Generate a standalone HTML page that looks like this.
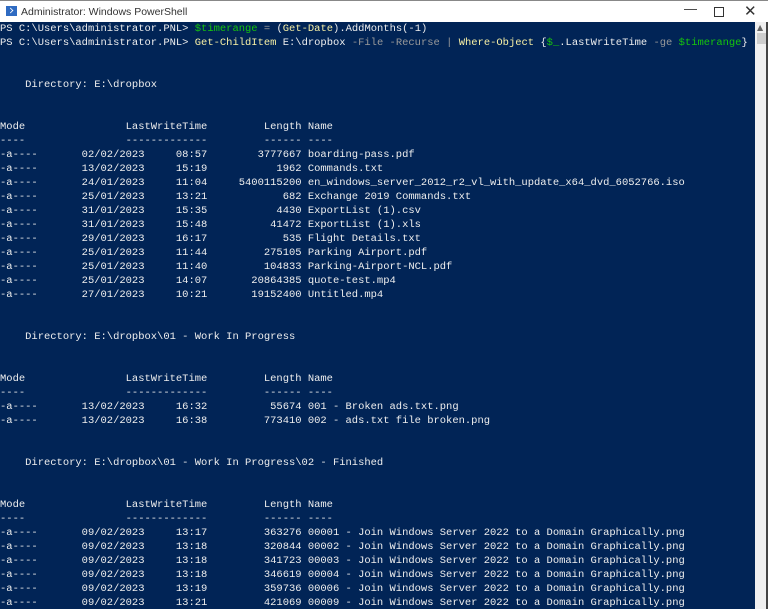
<!DOCTYPE html>
<html><head><meta charset="utf-8"><style>
html,body{margin:0;padding:0;width:768px;height:609px;overflow:hidden;background:#fff}
#title{position:absolute;left:0;top:0;width:768px;height:22px;background:#fff;border-top:1px solid #888;box-sizing:border-box}
#title .t{position:absolute;left:21px;top:5px;font:10.5px "Liberation Sans",sans-serif;color:#333}
#icon{position:absolute;left:6px;top:5px;width:11px;height:10px;background:#2f6bc2}
#icon:after{content:"";position:absolute;left:2px;top:2px;width:4px;height:4px;border-right:1.5px solid #fff;border-bottom:1.5px solid #fff;transform:rotate(-45deg) scale(.8)}
.ctl{position:absolute;top:3px;font:13px "Liberation Sans",sans-serif;color:#333}
#con{position:absolute;left:0;top:22px;width:755px;height:587px;background:#012456;overflow:hidden}
pre{margin:0;font:10.48px/14px "Liberation Mono",monospace;color:#eeeeee;white-space:pre}
.g{color:#16c60c}.y{color:#f9f1a5}.d{color:#9a9a9a}
#sb{position:absolute;left:755px;top:22px;width:12px;height:587px;background:#f0f0f0}
#thumb{position:absolute;left:757px;top:33px;width:9px;height:11px;background:#cdcdcd}
#edge{position:absolute;left:766px;top:22px;width:2px;height:587px;background:#444}
</style></head><body>
<div id="title"><div id="icon"></div><span class="t">Administrator: Windows PowerShell</span>
<span class="ctl" style="left:684px;top:0px">&#8212;</span>
<span style="position:absolute;left:714px;top:6px;width:8px;height:8px;border:1px solid #333"></span>
<span class="ctl" style="left:744px;top:1px;font-size:15px">&#10005;</span></div>
<div id="con"><pre>PS C:\Users\administrator.PNL&gt; <span class="g">$timerange</span> <span class="d">=</span> (<span class="y">Get-Date</span>).AddMonths(-1)
PS C:\Users\administrator.PNL&gt; <span class="y">Get-ChildItem</span> E:\dropbox <span class="d">-File</span> <span class="d">-Recurse</span> <span class="d">|</span> <span class="y">Where-Object</span> {<span class="g">$_</span>.LastWriteTime <span class="d">-ge</span> <span class="g">$timerange</span>}


    Directory: E:\dropbox


Mode                LastWriteTime         Length Name
----                -------------         ------ ----
-a----       02/02/2023     08:57        3777667 boarding-pass.pdf
-a----       13/02/2023     15:19           1962 Commands.txt
-a----       24/01/2023     11:04     5400115200 en_windows_server_2012_r2_vl_with_update_x64_dvd_6052766.iso
-a----       25/01/2023     13:21            682 Exchange 2019 Commands.txt
-a----       31/01/2023     15:35           4430 ExportList (1).csv
-a----       31/01/2023     15:48          41472 ExportList (1).xls
-a----       29/01/2023     16:17            535 Flight Details.txt
-a----       25/01/2023     11:44         275105 Parking Airport.pdf
-a----       25/01/2023     11:40         104833 Parking-Airport-NCL.pdf
-a----       25/01/2023     14:07       20864385 quote-test.mp4
-a----       27/01/2023     10:21       19152400 Untitled.mp4


    Directory: E:\dropbox\01 - Work In Progress


Mode                LastWriteTime         Length Name
----                -------------         ------ ----
-a----       13/02/2023     16:32          55674 001 - Broken ads.txt.png
-a----       13/02/2023     16:38         773410 002 - ads.txt file broken.png


    Directory: E:\dropbox\01 - Work In Progress\02 - Finished


Mode                LastWriteTime         Length Name
----                -------------         ------ ----
-a----       09/02/2023     13:17         363276 00001 - Join Windows Server 2022 to a Domain Graphically.png
-a----       09/02/2023     13:18         320844 00002 - Join Windows Server 2022 to a Domain Graphically.png
-a----       09/02/2023     13:18         341723 00003 - Join Windows Server 2022 to a Domain Graphically.png
-a----       09/02/2023     13:18         346619 00004 - Join Windows Server 2022 to a Domain Graphically.png
-a----       09/02/2023     13:19         359736 00006 - Join Windows Server 2022 to a Domain Graphically.png
-a----       09/02/2023     13:21         421069 00009 - Join Windows Server 2022 to a Domain Graphically.png
</pre></div>
<div id="sb"></div><div id="thumb"></div>
<span style="position:absolute;left:757px;top:23px;font:8px 'DejaVu Sans',sans-serif;color:#666">&#9650;</span>
<div id="edge"></div>
</body></html>
